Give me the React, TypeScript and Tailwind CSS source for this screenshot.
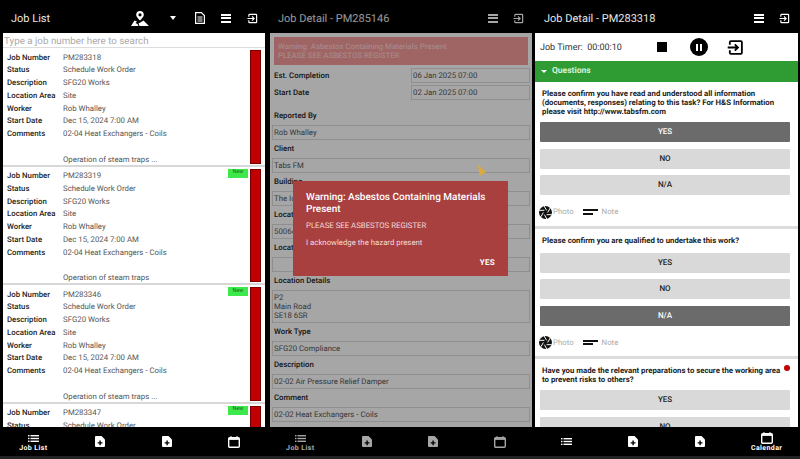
type Job = { number: string; isNew?: boolean; ellipsis?: boolean };

const jobs: Job[] = [
  { number: 'PM283318', ellipsis: true },
  { number: 'PM283319', isNew: true },
  { number: 'PM283346', isNew: true, ellipsis: true },
];

const ExitIcon = ({ size = 11 }: { size?: number }) => (
  <svg width={size} height={size} viewBox="0 0 24 24" fill="none" stroke="currentColor" strokeWidth={2.6}>
    <path d="M4 8V4.5A1.5 1.5 0 0 1 5.5 3h14A1.5 1.5 0 0 1 21 4.5v15a1.5 1.5 0 0 1-1.5 1.5h-14A1.5 1.5 0 0 1 4 19.5V16" />
    <path d="M1 12h14M11 7.5l4.5 4.5-4.5 4.5" />
  </svg>
);

const MenuIcon = () => (
  <span className="flex flex-col gap-[1.5px]">
    <span className="block h-[2px] w-[10px] bg-current" />
    <span className="block h-[2px] w-[10px] bg-current" />
    <span className="block h-[2px] w-[10px] bg-current" />
  </span>
);

const ListIcon = () => (
  <svg width="11" height="7" viewBox="0 0 11 7" fill="currentColor">
    <rect x="0" y="0" width="1.5" height="1.4" />
    <rect x="2.5" y="0" width="8.5" height="1.4" />
    <rect x="0" y="2.8" width="1.5" height="1.4" />
    <rect x="2.5" y="2.8" width="8.5" height="1.4" />
    <rect x="0" y="5.6" width="1.5" height="1.4" />
    <rect x="2.5" y="5.6" width="8.5" height="1.4" />
  </svg>
);

const FilePlusIcon = () => (
  <svg width="10" height="11" viewBox="0 0 10 11">
    <path d="M1 0h5.5L10 3.5V10a1 1 0 0 1-1 1H1a1 1 0 0 1-1-1V1a1 1 0 0 1 1-1z" fill="currentColor" />
    <path d="M4.4 4.500h1.400v1.700h1.700v1.400H5.800v1.700H4.400V7.600H2.700V6.200h1.700z" fill="#000" />
  </svg>
);

const CalendarIcon = () => (
  <svg width="12" height="12" viewBox="0 0 12 12" fill="none" stroke="currentColor">
    <rect x="0.7" y="1.7" width="10.6" height="9.6" rx="1" strokeWidth="1.4" />
    <path d="M0.7 3h10.6" strokeWidth="1.8" />
    <path d="M3 0v2M9 0v2" strokeWidth="1" />
  </svg>
);

const WorkerMapIcon = () => (
  <svg width="18" height="15" viewBox="0 0 18 15" fill="#fff">
    <path d="M9 0a3.8 3.8 0 0 0-3.8 3.8C5.2 6.2 9 9.5 9 9.5s3.8-3.3 3.8-5.7A3.8 3.8 0 0 0 9 0zm0 2.2a1.6 1.6 0 1 1 0 3.2 1.6 1.6 0 0 1 0-3.2z" fillRule="evenodd" />
    <path d="M0 15 3.5 9.5l2.5 1-1.5 1.5 2 1 1 2zM8.5 15l-1-2.500 3.500-2 1.500-1 5.500 5.500z" />
  </svg>
);

const ApertureIcon = () => (
  <svg width="13" height="13" viewBox="0 0 24 24">
    <circle cx="12" cy="12" r="12" fill="#111" />
    <g stroke="#fff" strokeWidth="1.8" fill="none">
      <path d="M14 8 9.5 0M16 12 20.5 4M14 16 23.5 16M10 16 14.5 24M8 12 3.5 20M10 8 0.5 8" />
    </g>
  </svg>
);

const NoteIcon = () => (
  <span className="flex flex-col gap-[1.5px]">
    <span className="block h-[2px] w-[15px] bg-[#111]" />
    <span className="block h-[2px] w-[10px] bg-[#111]" />
  </span>
);

const Header = ({ title, children }: { title: string; children: React.ReactNode }) => (
  <div className="flex h-[33px] shrink-0 items-center bg-black pl-[11px] pr-[9px] pt-[3px] text-white">
    <span className="whitespace-nowrap text-[11px] leading-none text-[#e8e8e8]">{title}</span>
    <div className="ml-auto flex items-center">{children}</div>
  </div>
);

const BottomNav = ({ active }: { active: 'list' | 'calendar' }) => (
  <div className="grid h-[29px] shrink-0 grid-cols-4 bg-black text-white">
    <div className={`flex flex-col items-center justify-center gap-[2px] ${active === 'list' ? 'pt-[3px]' : ''}`}>
      <ListIcon />
      {active === 'list' && <span className="text-[7px] font-bold leading-[8px] tracking-[0.4px]">Job List</span>}
    </div>
    <div className="flex items-center justify-center">
      <FilePlusIcon />
    </div>
    <div className="flex items-center justify-center">
      <FilePlusIcon />
    </div>
    <div className="flex flex-col items-center justify-center">
      <CalendarIcon />
      {active === 'calendar' && <span className="text-[7px] font-bold leading-[8px] tracking-[0.4px]">Calendar</span>}
    </div>
  </div>
);

const Row = ({ label, value }: { label: string; value: string }) => (
  <div className="flex h-[12.8px] items-center whitespace-nowrap text-[7.8px] leading-none">
    <span className="w-[56px] shrink-0 font-medium text-[#222]">{label}</span>
    <span className="text-[#555]">{value}</span>
  </div>
);

const JobCard = ({ job, partial }: { job: Job; partial?: boolean }) => (
  <div className="flex h-[118.5px] shrink-0 border-b-2 border-[#d8d8d8] pl-[4px] pr-[4px] pt-[2px]">
    <div className="flex-1 pt-[1px]">
      <Row label="Job Number" value={job.number} />
      <Row label="Status" value="Schedule Work Order" />
      {!partial && (
        <>
          <Row label="Description" value="SFG20 Works" />
          <Row label="Location Area" value="Site" />
          <Row label="Worker" value="Rob Whalley" />
          <Row label="Start Date" value="Dec 15, 2024 7:00 AM" />
          <Row label="Comments" value="02-04 Heat Exchangers - Coils" />
          <div className="h-[12.8px]" />
          <Row label="" value={job.ellipsis ? 'Operation of steam traps ...' : 'Operation of steam traps'} />
        </>
      )}
    </div>
    {job.isNew && (
      <span className="mr-[2px] flex h-[9px] w-[20px] items-center justify-center bg-[#3de84a] text-[5.5px] leading-none text-[#1a6b1a]">
        New
      </span>
    )}
    <div className="mb-[1px] w-[11px] border border-[#7a0000] bg-[#c00000]" />
  </div>
);

const Label = ({ children }: { children: React.ReactNode }) => (
  <div className="flex h-[18px] items-center pl-[2px] text-[7.8px] font-medium leading-none text-[#222]">{children}</div>
);

const Field = ({ children, tall }: { children?: React.ReactNode; tall?: boolean }) => (
  <div className={`flex items-center border border-[#dcdcdc] pl-[1px] text-[7.8px] leading-[9px] text-[#555] ${tall ? 'h-[33px]' : 'h-[15px]'}`}>
    <div>{children}</div>
  </div>
);

const DateRow = ({ label, value }: { label: string; value: string }) => (
  <div className="flex h-[17px] items-center">
    <span className="w-[139px] pl-[2px] text-[7.8px] font-medium leading-none text-[#222]">{label}</span>
    <span className="flex h-[15px] flex-1 items-center border border-[#dcdcdc] pl-[1px] text-[7.8px] leading-none text-[#555]">{value}</span>
  </div>
);

const Answer = ({ label, selected }: { label: string; selected?: boolean }) => (
  <div className={`ml-[5px] mr-[8px] mb-[6.5px] flex h-[20px] shrink-0 items-center justify-center rounded-[1px] text-[8px] font-medium leading-none ${selected ? 'bg-[#6b6b6b] text-white' : 'bg-[#d9d9d9] text-[#222]'}`}>
    {label}
  </div>
);

const Attachments = () => (
  <div className="flex h-[24px] shrink-0 items-center pb-[3px] pl-[4px] text-[7.8px] leading-none text-[#aaa]">
    <ApertureIcon />
    <span className="ml-[1px]">Photo</span>
    <span className="ml-[9px] mr-[4px]">
      <NoteIcon />
    </span>
    <span>Note</span>
  </div>
);

const Question = ({ lines, dot, height }: { lines: string[]; dot?: boolean; height: string }) => (
  <div className={`relative shrink-0 pl-[7px] pt-[7px] text-[7.8px] font-bold leading-[9px] text-[#222] ${height}`}>
    {lines.map((line) => (
      <div key={line} className="whitespace-nowrap">{line}</div>
    ))}
    {dot && <span className="absolute right-[8px] top-[6px] h-[6px] w-[6px] rounded-full bg-[#c00000]" />}
  </div>
);

export default function App() {
  return (
    <div className="flex h-[459px] w-[800px] overflow-hidden bg-[#222] font-['Roboto',sans-serif] [text-rendering:geometricPrecision]">
      {/* job list */}
      <div className="flex h-[456px] w-[267px] shrink-0 flex-col bg-black">
        <Header title="Job List">
          <WorkerMapIcon />
          <span className="ml-[21px] h-0 w-0 border-x-[3px] border-t-[4px] border-x-transparent border-t-white" />
          <svg className="ml-[19px]" width="10" height="12" viewBox="0 0 10 12" fill="none" stroke="#fff" strokeWidth="1.2">
            <path d="M.6.6h5.8L9.4 3.6v7.8H.6z" />
            <path d="M2.5 5h5M2.5 7h5M2.5 9h5" />
          </svg>
          <span className="ml-[16px]"><MenuIcon /></span>
          <span className="ml-[16px]"><ExitIcon /></span>
        </Header>
        <div className="ml-[3px] mr-[2px] flex min-h-0 flex-1 flex-col overflow-hidden bg-white">
          <div className="flex h-[15px] shrink-0 items-center border-b border-[#ddd] pl-[1px] pt-[3px] text-[9.8px] leading-none text-[#aaa]">
            Type a job number here to search
          </div>
          {jobs.map((job) => (
            <JobCard key={job.number} job={job} />
          ))}
          <JobCard job={{ number: 'PM283347', isNew: true }} partial />
        </div>
        <BottomNav active="list" />
      </div>

      {/* job detail with hazard dialog */}
      <div className="relative flex h-[456px] w-[266px] shrink-0 flex-col bg-black">
        <Header title="Job Detail - PM285146">
          <MenuIcon />
          <span className="ml-[15px]"><ExitIcon /></span>
        </Header>
        <div className="ml-[3px] mr-[1px] min-h-0 flex-1 overflow-hidden bg-white px-[2px] pt-[4px]">
          <div className="mx-[2px] flex h-[28px] flex-col justify-center bg-[#f59a9a] pl-[4px] text-[7.8px] font-medium leading-[9px] text-[#ffd0d0]">
            <div>Warning: Asbestos Containing Materials Present</div>
            <div>PLEASE SEE ASBESTOS REGISTER</div>
          </div>
          <div className="mt-[2px]" />
          <DateRow label="Est. Completion" value="06 Jan 2025 07:00" />
          <DateRow label="Start Date" value="02 Jan 2025 07:00" />
          <div className="h-[6px]" />
          <Label>Reported By</Label>
          <Field>Rob Whalley</Field>
          <Label>Client</Label>
          <Field>Tabs FM</Field>
          <Label>Building</Label>
          <Field>The Icon</Field>
          <Label>Location</Label>
          <Field>50064</Field>
          <Label>Location</Label>
          <Field />
          <Label>Location Details</Label>
          <Field tall>
            P2<br />Main Road<br />SE18 6SR
          </Field>
          <Label>Work Type</Label>
          <Field>SFG20 Compliance</Field>
          <Label>Description</Label>
          <Field>02-02 Air Pressure Relief Damper</Field>
          <Label>Comment</Label>
          <Field>02-02 Heat Exchangers - Coils</Field>
        </div>
        <BottomNav active="list" />

        <div className="absolute inset-0 bg-black/35" />
        <svg className="absolute left-[211px] top-[165px]" width="8" height="11" viewBox="0 0 8 11">
          <path d="M0 0 8 7 1.500 11z" fill="#dcaa3c" />
        </svg>
        <div className="absolute left-[26px] top-[181px] h-[95px] w-[215px] bg-[#a84040] px-[13px] pt-[11px] text-white">
          <div className="text-[10px] font-medium leading-[11.5px]">Warning: Asbestos Containing Materials Present</div>
          <div className="mt-[7px] text-[7.8px] leading-[8px] text-[#f3dcdc]">PLEASE SEE ASBESTOS REGISTER</div>
          <div className="mt-[9px] text-[7.8px] leading-[8px] text-[#f3dcdc]">I acknowledge the hazard present</div>
          <div className="mt-[12px] text-right text-[8px] font-bold leading-[8px] tracking-[0.3px]">YES</div>
        </div>
      </div>

      {/* job detail questions */}
      <div className="flex h-[456px] w-[267px] shrink-0 flex-col bg-black">
        <Header title="Job Detail - PM283318">
          <MenuIcon />
          <span className="ml-[15px] mr-[1px]"><ExitIcon /></span>
        </Header>
        <div className="ml-[2px] mr-[2px] flex min-h-0 flex-1 flex-col overflow-hidden bg-white">
          <div className="flex h-[28px] shrink-0 items-center pl-[5px] text-[9px] leading-none text-[#333]">
            <span className="mt-[2px] w-[117px] whitespace-nowrap">Job Timer:&nbsp; 00:00:10</span>
            <span className="h-[10px] w-[10px] bg-black" />
            <span className="ml-[23px] flex h-[18px] w-[18px] items-center justify-center gap-[2px] rounded-full bg-black">
              <span className="h-[7px] w-[2px] bg-white" />
              <span className="h-[7px] w-[2px] bg-white" />
            </span>
            <span className="ml-[19px] text-black"><ExitIcon size={17} /></span>
          </div>
          <div className="flex h-[21px] shrink-0 items-center bg-[#2e9c33] pl-[6px] text-[8.5px] font-bold leading-none text-[#d8f0d8]">
            <span className="h-0 w-0 border-x-[3px] border-t-[3.5px] border-x-transparent border-t-white" />
            <span className="ml-[5px]">Questions</span>
          </div>
          <Question
            height="h-[40px]"
            lines={[
              'Please confirm you have read and understood all information',
              '(documents, responses) relating to this task? For H&S Information',
              'please visit http://www.tabsfm.com',
            ]}
          />
          <Answer label="YES" selected />
          <Answer label="NO" />
          <Answer label="N/A" />
          <Attachments />
          <div className="h-[3px] shrink-0 bg-[#dcdcdc]" />
          <Question height="h-[24px]" lines={['Please confirm you are qualified to undertake this work?']} />
          <Answer label="YES" />
          <Answer label="NO" />
          <Answer label="N/A" selected />
          <Attachments />
          <div className="h-[3px] shrink-0 bg-[#dcdcdc]" />
          <Question
            dot
            height="h-[31px]"
            lines={['Have you made the relevant preparations to secure the working area', 'to prevent risks to others?']}
          />
          <Answer label="YES" />
          <Answer label="NO" />
        </div>
        <BottomNav active="calendar" />
      </div>
    </div>
  );
}
